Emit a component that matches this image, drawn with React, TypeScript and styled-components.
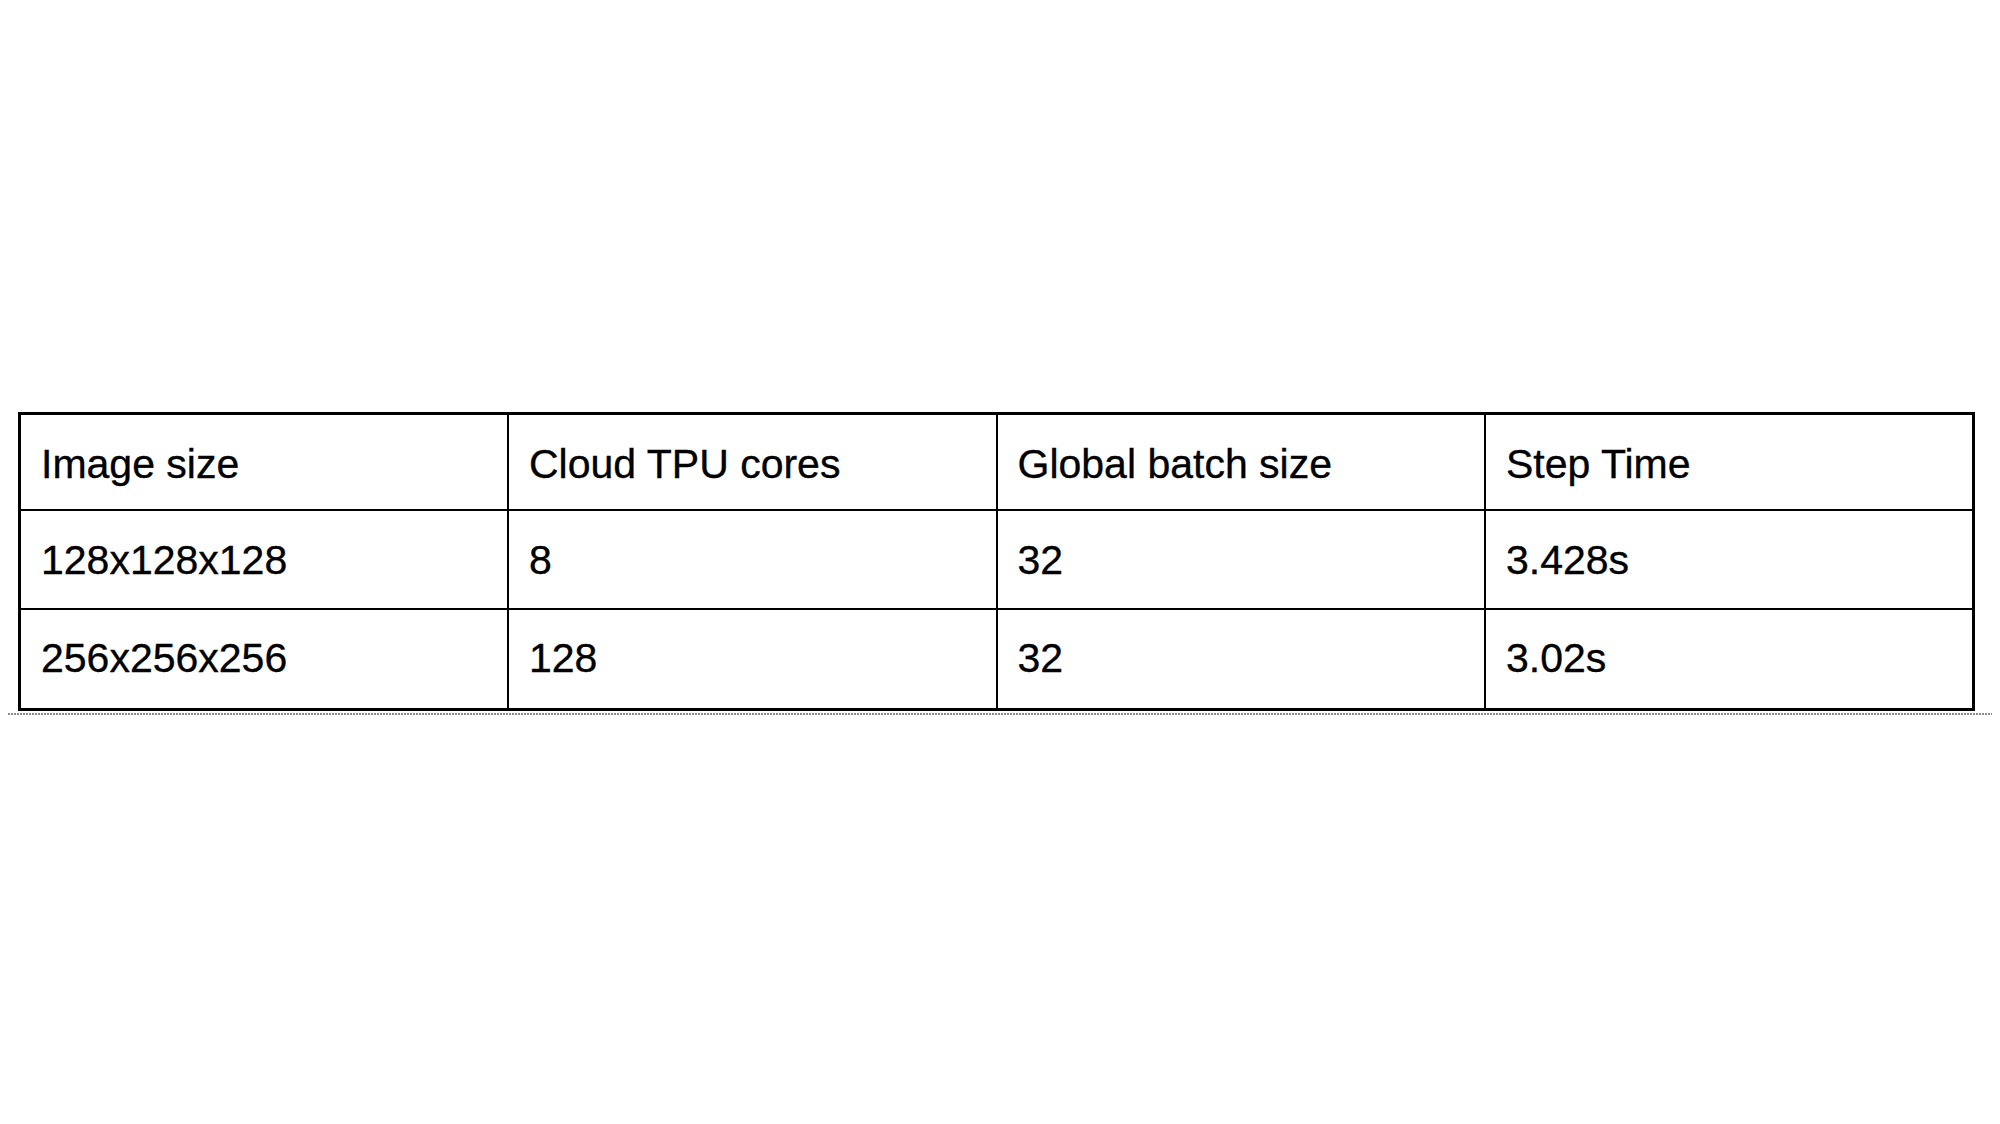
import React from 'react'
import styled, { createGlobalStyle } from 'styled-components'

const GlobalStyle = createGlobalStyle`
  html, body {
    margin: 0;
    padding: 0;
    background: #fff;
  }
  body {
    font-family: 'Liberation Sans', Arial, sans-serif;
    color: #000;
  }
`

const Page = styled.div`
  width: 2000px;
  height: 1124px;
  padding-top: 412px;
  box-sizing: border-box;
  display: flex;
  flex-direction: column;
`

const TableWrap = styled.div`
  padding: 0 25px 0 18px;
`

const Table = styled.table`
  width: 100%;
  border-collapse: collapse;
  table-layout: fixed;
  border: 3px solid #000;
`

const Row = styled.tr<{ $height: number }>`
  height: ${props => props.$height}px;
`

const Cell = styled.td<{ $shift: number }>`
  border: 2px solid #000;
  padding: ${props => props.$shift}px 20px 0 20px;
  font-size: 41px;
  line-height: 1;
  vertical-align: middle;
  white-space: nowrap;
  -webkit-text-stroke: 0.35px #000;
`

const DottedRule = styled.div`
  margin: 2px 0 0 8px;
  width: 1984px;
  height: 2px;
  background: repeating-linear-gradient(
    to right,
    #8c8c8c 0,
    #8c8c8c 2px,
    transparent 2px,
    transparent 3px
  );
`

const rows = [
  { height: 96, shift: 5, cells: ['Image size', 'Cloud TPU cores', 'Global batch size', 'Step Time'] },
  { height: 99, shift: 3, cells: ['128x128x128', '8', '32', '3.428s'] },
  { height: 101, shift: 0, cells: ['256x256x256', '128', '32', '3.02s'] },
]

const App: React.FC = () => (
  <>
    <GlobalStyle />
    <Page>
      <TableWrap>
        <Table>
          <tbody>
            {rows.map((row, i) => (
              <Row key={i} $height={row.height}>
                {row.cells.map((c, j) => (
                  <Cell key={j} $shift={row.shift}>
                    {c}
                  </Cell>
                ))}
              </Row>
            ))}
          </tbody>
        </Table>
      </TableWrap>
      <DottedRule />
    </Page>
  </>
)

export default App
